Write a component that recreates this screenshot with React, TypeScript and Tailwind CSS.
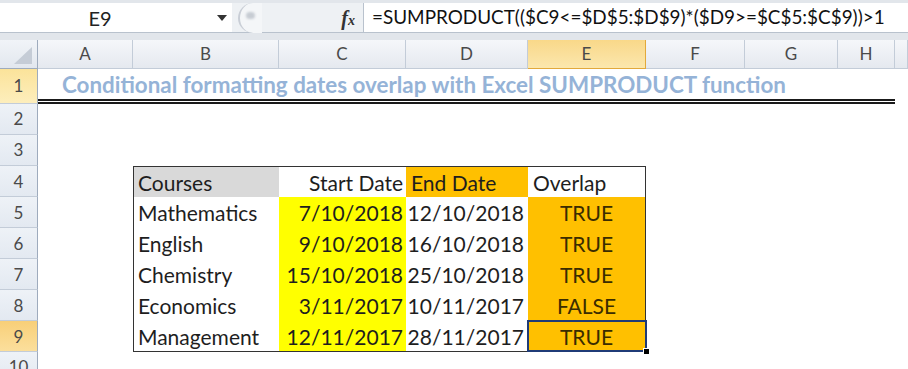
import React from 'react';

const cols = ['A', 'B', 'C', 'D', 'E', 'F', 'G', 'H', ''];

interface Course {
  name: string;
  start: string;
  end: string;
  overlap: string;
}

const courses: Course[] = [
  { name: 'Mathematics', start: '7/10/2018', end: '12/10/2018', overlap: 'TRUE' },
  { name: 'English', start: '9/10/2018', end: '16/10/2018', overlap: 'TRUE' },
  { name: 'Chemistry', start: '15/10/2018', end: '25/10/2018', overlap: 'TRUE' },
  { name: 'Economics', start: '3/11/2017', end: '10/11/2017', overlap: 'FALSE' },
  { name: 'Management', start: '12/11/2017', end: '28/11/2017', overlap: 'TRUE' },
];

const gridCols = 'grid grid-cols-[38px_95px_146px_127px_122px_118px_99px_93px_57px_1fr]';
const cellFont = "font-['Lato','Noto_Sans',sans-serif] text-[21px] text-[#1e1e1e] leading-none";

const RowHead: React.FC<{ n: number; active?: string; h: string }> = ({ n, active, h }) => (
  <div
    className={`${h} flex items-center justify-center border-r border-r-[#9eabbd] border-b border-b-[#c3ccd8] font-['Lato',sans-serif] text-[17px] text-[#4a4a4a] ${
      active ?? 'bg-gradient-to-b from-[#eef2f7] to-[#e3e9f1]'
    }`}
  >
    {n}
  </div>
);

const FormulaBar: React.FC = () => (
  <div className="h-[40px] bg-[#e2e6eb] pt-[3px]">
    <div className="flex h-[30px] border-b border-[#b9c2cd]">
      <div className="flex w-[232px] items-center bg-white">
        <span className="w-[200px] text-center font-['Lato',sans-serif] text-[20px] text-[#222]">E9</span>
        <svg width="10" height="6" viewBox="0 0 10 6" className="ml-[17px]">
          <polygon points="0,0 10,0 5,6" fill="#333" />
        </svg>
      </div>
      <div className="flex flex-1 items-center bg-[#eef1f4]">
        <div className="relative ml-[6px] h-[30px] w-[24px] rounded-l-full border-l-2 border-[#c9ced6] bg-[#f4f6f8]">
          <div className="absolute left-[6px] top-[9px] h-[7px] w-[9px] rounded-full bg-[#c7ccd3] blur-[1px]" />
        </div>
        <div className="ml-auto mr-[8px] font-['Liberation_Serif',serif] text-[20px] font-bold italic text-[#333]">
          f<span className="text-[14px]">x</span>
        </div>
      </div>
      <div className="flex w-[545px] items-center border-l border-[#b9c2cd] bg-white pl-[8px] font-['Lato',sans-serif] text-[18.9px] text-[#111]">
        =SUMPRODUCT(($C9&lt;=$D$5:$D$9)*($D9&gt;=$C$5:$C$9))&gt;1
      </div>
    </div>
  </div>
);

const App: React.FC = () => {
  return (
    <div className="h-[369px] w-[908px] overflow-hidden bg-white">
      <FormulaBar />

      {/* column headers */}
      <div className={`${gridCols} h-[29px]`}>
        <div className="relative border-r border-b border-[#9eabbd] bg-gradient-to-b from-[#f1f4f8] to-[#e2e7ee]">
          <svg width="18" height="17" viewBox="0 0 18 17" className="absolute right-[5px] bottom-[4px]">
            <polygon points="18,0 18,17 0,17" fill="#c5ccd6" />
          </svg>
        </div>
        {cols.map((c, i) => (
          <div
            key={i}
            className={`flex items-center justify-center border-b border-r font-['Lato',sans-serif] text-[17px] text-[#4a4a4a] ${
              c === 'E'
                ? 'border-[#e2a93b] bg-gradient-to-b from-[#f9d889] to-[#fbe7ad]'
                : 'border-[#c3ccd8] bg-gradient-to-b from-[#f5f7fa] to-[#e5e9ef]'
            }`}
          >
            {c}
          </div>
        ))}
      </div>

      {/* row 1 - title */}
      <div className={gridCols}>
        <RowHead n={1} h="h-[35px]" active="bg-gradient-to-b from-[#fbe39a] to-[#fdeebc]" />
        <div className="col-span-8 flex h-[35px] items-center border-b-[5px] border-double border-[#1a1a1a] pl-[24px] pt-[1px]">
          <span className="whitespace-nowrap font-['Lato',sans-serif] text-[22.4px] font-bold text-[#95b3d7]">
            Conditional formatting dates overlap with Excel SUMPRODUCT function
          </span>
        </div>
        <div />
      </div>

      {/* rows 2-3 */}
      {[2, 3].map((n) => (
        <div key={n} className={gridCols}>
          <RowHead n={n} h="h-[31px]" />
        </div>
      ))}

      {/* row 4 - table header */}
      <div className={`${gridCols} ${cellFont}`}>
        <RowHead n={4} h="h-[31px]" />
        <div />
        <div className="flex items-center border-t border-l border-[#333] bg-[#d9d9d9] pl-[4px]">Courses</div>
        <div className="flex items-center justify-end border-t border-[#333] pr-[3px]">Start Date</div>
        <div className="flex items-center border-t border-[#333] bg-[#ffc000] pl-[5px]">End Date</div>
        <div className="flex items-center border-t border-r border-[#333] pl-[5px]">Overlap</div>
      </div>

      {/* rows 5-9 - data */}
      {courses.map((c, i) => {
        const last = i === courses.length - 1;
        const bottom = last ? 'border-b border-[#333]' : '';
        return (
          <div key={c.name} className={`${gridCols} ${cellFont}`}>
            <RowHead
              n={i + 5}
              h="h-[31px]"
              active={last ? 'bg-gradient-to-b from-[#f8cf78] to-[#fbdf9c]' : undefined}
            />
            <div />
            <div className={`flex items-center border-l border-[#333] pl-[4px] ${bottom}`}>{c.name}</div>
            <div className={`flex items-center justify-end bg-[#ffff00] pr-[3px] ${bottom}`}>{c.start}</div>
            <div className={`flex items-center justify-end pr-[4px] ${bottom}`}>{c.end}</div>
            <div className={`relative flex items-center justify-center border-r border-[#333] bg-[#ffc000] text-[#3a2c00] ${bottom}`}>
              {c.overlap}
              {last && (
                <>
                  <div className="absolute -top-[1px] -left-[1px] -right-[2px] -bottom-[1px] border-2 border-[#1f3b77]" />
                  <div className="absolute -right-[5px] -bottom-[4px] h-[7px] w-[7px] border border-white bg-black" />
                </>
              )}
            </div>
          </div>
        );
      })}

      {/* row 10 */}
      <div className={gridCols}>
        <RowHead n={10} h="h-[31px]" />
      </div>
    </div>
  );
};

export default App;
